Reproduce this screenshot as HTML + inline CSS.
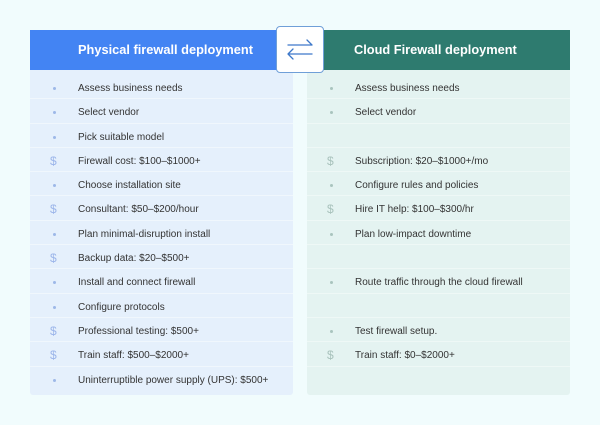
<!DOCTYPE html>
<html><head><style>
*{margin:0;padding:0;box-sizing:border-box}
body{width:600px;height:425px;background:#f1fcfd;font-family:"Liberation Sans",sans-serif;position:relative;overflow:hidden}
.h{position:absolute;top:30px;height:40px;color:#fff;font-size:12.8px;font-weight:bold;line-height:40px}
.hl{left:30px;width:263px;background:#4384f3;padding-left:48px}
.hr{left:307px;width:263px;background:#2e7b6f;padding-left:47px}
.col{position:absolute;top:70px;width:263px;height:325px;padding-top:5px;border-radius:0 0 3px 3px}
.cl{left:30px;background:#e5f0fc}
.cr{left:307px;background:#e4f3f1}
.r{height:24.3px;border-bottom:1px solid #f0f7fd;position:relative;font-size:10px;color:#333;line-height:27px;padding-left:48px}
.cr .r{border-bottom-color:#eef8f6}
.r:last-child{border-bottom:none}
.b{position:absolute;left:23px;top:12px;width:3px;height:3px;border-radius:50%;background:#9db8e8}
.cr .b{background:#a9c4be}
.d{position:absolute;left:20px;top:0;font-size:12px;color:#9bb5ea}
.cr .d{color:#a8c2bc}
.box{position:absolute;left:276px;top:26px;width:48px;height:47px;background:#fff;border:1px solid #6f9fd8;border-radius:4px}
</style></head><body>
<div class="h hl">Physical firewall deployment</div>
<div class="h hr">Cloud Firewall deployment</div>
<div class="col cl">
<div class="r"><span class="b"></span>Assess business needs</div>
<div class="r"><span class="b"></span>Select vendor</div>
<div class="r"><span class="b"></span>Pick suitable model</div>
<div class="r"><span class="d">$</span>Firewall cost: $100–$1000+</div>
<div class="r"><span class="b"></span>Choose installation site</div>
<div class="r"><span class="d">$</span>Consultant: $50–$200/hour</div>
<div class="r"><span class="b"></span>Plan minimal-disruption install</div>
<div class="r"><span class="d">$</span>Backup data: $20–$500+</div>
<div class="r"><span class="b"></span>Install and connect firewall</div>
<div class="r"><span class="b"></span>Configure protocols</div>
<div class="r"><span class="d">$</span>Professional testing: $500+</div>
<div class="r"><span class="d">$</span>Train staff: $500–$2000+</div>
<div class="r"><span class="b"></span>Uninterruptible power supply (UPS): $500+</div>
</div>
<div class="col cr">
<div class="r"><span class="b"></span>Assess business needs</div>
<div class="r"><span class="b"></span>Select vendor</div>
<div class="r"></div>
<div class="r"><span class="d">$</span>Subscription: $20–$1000+/mo</div>
<div class="r"><span class="b"></span>Configure rules and policies</div>
<div class="r"><span class="d">$</span>Hire IT help: $100–$300/hr</div>
<div class="r"><span class="b"></span>Plan low-impact downtime</div>
<div class="r"></div>
<div class="r"><span class="b"></span>Route traffic through the cloud firewall</div>
<div class="r"></div>
<div class="r"><span class="b"></span>Test firewall setup.</div>
<div class="r"><span class="d">$</span>Train staff: $0–$2000+</div>
<div class="r"></div>
</div>
<div class="box"><svg width="46" height="45" viewBox="0 0 46 45"><g fill="none" stroke="#3d78c9" stroke-width="1.3" stroke-linecap="round" stroke-linejoin="round"><path d="M11 18H35M30 13l5 5"/><path d="M35 27H11M16 22l-5 5 5 5"/></g></svg></div>
</body></html>
